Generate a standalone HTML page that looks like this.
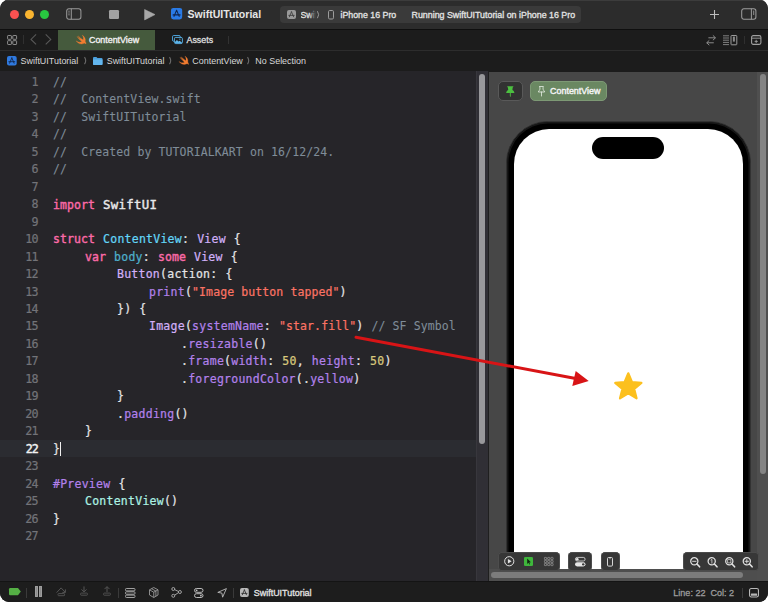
<!DOCTYPE html>
<html lang="en">
<head>
<meta charset="utf-8">
<title>SwiftUITutorial — ContentView.swift</title>
<style>
*{box-sizing:border-box;margin:0;padding:0}
html,body{width:768px;height:602px;overflow:hidden;background:#fff}
body{font-family:"Liberation Sans","DejaVu Sans",sans-serif;color:#dcdcdc;position:relative}
#win{position:absolute;left:0;top:0;width:768px;height:602px;border-radius:8.5px 8.5px 9px 9px;overflow:hidden;background:#1e1e1e}
.abs{position:absolute}
svg{position:absolute;overflow:visible}
/* ---------- title bar ---------- */
#title{position:absolute;left:0;top:0;width:768px;height:30px;background:#2c2c2c;border-bottom:1px solid #0f0f0f;box-shadow:inset 0 1px 0 #3c3c3c}
.tl{position:absolute;top:9.9px;width:9.3px;height:9.3px;border-radius:50%}
#proj{position:absolute;left:187.5px;top:7px;font-size:10.56px;font-weight:bold;color:#e6e6e6;line-height:15px;white-space:nowrap}
#pill{position:absolute;left:280px;top:6px;width:300.8px;height:17px;border-radius:4px;background:#3a3a3a}
.pilltxt{position:absolute;top:10px;font-size:8.8px;line-height:11px;color:#e4e4e4;white-space:nowrap;-webkit-text-stroke:0.3px #e4e4e4}
/* ---------- tab bar ---------- */
#tabs{position:absolute;left:0;top:30px;width:768px;height:21px;background:#1c1c1c;border-bottom:1px solid #2d2d2d}
.sh{position:absolute;left:0;top:-1px;width:768px;height:21px}
#tabA{position:absolute;left:58px;top:1px;width:97px;height:20px;background:#455a3d}
.tabtxt{position:absolute;top:5.5px;font-size:8.9px;line-height:11px;white-space:nowrap;-webkit-text-stroke:0.35px currentColor}
/* ---------- breadcrumb ---------- */
#crumb{position:absolute;left:0;top:51px;width:768px;height:20.5px;background:#1c1c1c}
.ct{position:absolute;top:5.5px;font-size:8.95px;line-height:11px;color:#d8d8d8;white-space:nowrap}
.chev{position:absolute;top:5.5px;font-size:9px;line-height:11px;color:#7a7a7a}
/* ---------- editor ---------- */
#editor{position:absolute;left:0;top:71px;width:476px;height:510px;background:#262529;overflow:hidden}
#hl{position:absolute;left:0;top:368.7px;width:476px;height:17.4px;background:#2b2c31}
.row{position:absolute;left:0;width:476px;height:17.5px;font-family:"DejaVu Sans Mono","Liberation Mono",monospace;font-size:11.5px;line-height:17.5px;white-space:pre}
.ln{position:absolute;right:438px;top:0;color:#737479;font-size:11.7px;letter-spacing:-0.6px;-webkit-text-stroke:0.2px #737479}
.cur-ln{color:#f2f2f2;-webkit-text-stroke:0.45px #f2f2f2;letter-spacing:-0.9px}
.code{position:absolute;top:0;letter-spacing:0.25px;word-spacing:0.83px;color:#dfdfe0;-webkit-text-stroke:0.22px currentColor}
.c{color:#7f8c98;letter-spacing:0.11px;word-spacing:0;-webkit-text-stroke:0.1px #7f8c98}
.k{color:#fb6aa8;letter-spacing:0.08px;-webkit-text-stroke:0.4px #fb6aa8}
.p{color:#e4e4e6}
.mod{color:#e9e9ea;font-size:12.4px;letter-spacing:0.3px;-webkit-text-stroke:0.4px #e9e9ea}
.td{color:#63d6f8}
.od{color:#4eb0cc}
.oc{color:#d2b0f8}
.of{color:#b281eb}
.s{color:#fc7364;word-spacing:0;letter-spacing:0.1px}
.n{color:#d9c97c}
.pc{color:#acf2e4}
.caret{display:inline-block;width:1px;height:14px;background:#f0f0f0;vertical-align:-3px;margin-left:0px}
#gutter{position:absolute;left:476px;top:71px;width:13px;height:510px;background:#302f35;border-right:1.8px solid #1f1f1f;border-left:0.6px solid #38373d}
#scrE{position:absolute;left:479.3px;top:74.3px;width:6px;height:370px;border-radius:3px;background:#98989b}
/* ---------- canvas ---------- */
#canvas{position:absolute;left:489px;top:72px;width:279px;height:509px;background:#474747;overflow:hidden}
#vtrack{position:absolute;left:267.5px;top:0;width:12px;height:509px;background:#4f4f4f}
#vscr{position:absolute;left:270.7px;top:2.3px;width:6.5px;height:400px;border-radius:3.3px;background:#848484}
#htrack{position:absolute;left:0;top:497.2px;width:268px;height:12px;background:#4e4e4e}
#hscr{position:absolute;left:1.8px;top:500.2px;width:252px;height:6px;border-radius:3px;background:#7c7c7c}
#phone{position:absolute;left:16.9px;top:48.9px;width:245.4px;height:560px;border-radius:42px;background:#000;border:1.6px solid #323232;box-shadow:0 0 0 1.5px #171717 inset}
#screen{position:absolute;left:25.2px;top:57.3px;width:228.8px;height:560px;border-radius:35px;background:#fff}
#island{position:absolute;left:103.3px;top:65px;width:71.5px;height:22px;border-radius:11px;background:#000}
.btn{position:absolute;border-radius:4.5px}
#pinbtn{left:8.7px;top:9.1px;width:25px;height:19.9px;background:#323232;border:1px solid #595959;border-radius:5px}
#cvbtn{left:41.1px;top:9.1px;width:76.9px;height:19.7px;background:#6a8862;border:0.8px solid #7d9975;border-radius:5px}
#cvbtn span{position:absolute;left:19px;top:4.1px;font-size:8.92px;line-height:11px;-webkit-text-stroke:0.4px #f4f4f4;color:#f4f4f4;white-space:nowrap}
.tb{position:absolute;top:480px;height:19px;border-radius:4.5px;background:#373737;box-shadow:0 0 0 0.8px #535353 inset}
/* ---------- status bar ---------- */
#status{position:absolute;left:0;top:581px;width:768px;height:21px;background:#1d1d1d;border-top:1px solid #141414}
.st{position:absolute;top:6px;font-size:9.3px;line-height:11px;white-space:nowrap}
</style>
</head>
<body>
<div id="win">

<!-- ================= TITLE BAR ================= -->
<div id="title">
  <div class="tl" style="left:9.7px;background:#fb5251"></div>
  <div class="tl" style="left:24.8px;background:#fab530"></div>
  <div class="tl" style="left:40px;background:#28c840"></div>
  <!-- sidebar toggle -->
  <svg style="left:66px;top:8px" width="16" height="12" viewBox="0 0 16 12"><rect x="0.7" y="0.7" width="14.2" height="10.6" rx="2.2" fill="none" stroke="#999" stroke-width="1.05"/><line x1="5.3" y1="0.7" x2="5.3" y2="11.3" stroke="#999" stroke-width="1"/><path d="M2.2 3.2h1.6M2.2 5h1.6M2.2 6.8h1.6" stroke="#a9a9a9" stroke-width="0.7"/></svg>
  <!-- stop -->
  <div class="abs" style="left:109.4px;top:10.2px;width:9.2px;height:8.7px;border-radius:1.2px;background:#a2a2a2"></div>
  <!-- play -->
  <svg style="left:144px;top:8.7px" width="12" height="12" viewBox="0 0 12 12"><path d="M0.6 0.5 L11 5.6 L0.6 10.9 Z" fill="#a8a8a8" stroke="#a8a8a8" stroke-width="0.6" stroke-linejoin="round"/></svg>
  <!-- app icon -->
  <svg style="left:171px;top:8.4px" width="11.2" height="11.4" viewBox="0 0 11.2 11.4"><rect x="0" y="0" width="11.2" height="11.4" rx="2.5" fill="#2a7be6"/><path d="M5.6 2.3 L3 8.4 M5.6 2.3 L8.2 8.4 M2.1 6.9 H9.1" stroke="#10254d" stroke-width="1.05" fill="none" stroke-linecap="round"/></svg>
  <div id="proj">SwiftUITutorial</div>
  <div id="pill"></div>
  <svg style="left:286.5px;top:10.3px" width="9" height="9" viewBox="0 0 9 9"><rect width="9" height="9" rx="2" fill="#9a9a9a"/><path d="M4.5 1.8 L2.4 6.8 M4.5 1.8 L6.6 6.8 M1.8 5.4 H7.2" stroke="#3a3a3a" stroke-width="0.8" fill="none" stroke-linecap="round"/></svg>
  <div class="pilltxt" style="left:300.5px;width:15px;overflow:hidden;color:#dedede">Swif</div>
  <div class="abs" style="left:309px;top:8px;width:7px;height:14px;background:linear-gradient(90deg,rgba(58,58,58,0),#3a3a3a)"></div>
  <svg style="left:317px;top:11px" width="3" height="7.4" viewBox="0 0 3 7.4"><path d="M0.4 0.2 Q2.9 3.7 0.4 7.2" fill="none" stroke="#a0a0a0" stroke-width="0.9"/></svg>
  <svg style="left:328px;top:10px" width="6" height="9.5" viewBox="0 0 6 9.5"><rect x="0.5" y="0.5" width="5" height="8.5" rx="1.2" fill="none" stroke="#9c9c9c" stroke-width="1"/></svg>
  <div class="pilltxt" style="left:340.5px">iPhone 16 Pro</div>
  <div class="pilltxt" style="left:411.5px;font-size:8.87px">Running SwiftUITutorial on iPhone 16 Pro</div>
  <!-- plus -->
  <svg style="left:709.5px;top:10.2px" width="9" height="9" viewBox="0 0 9 9"><path d="M4.5 0V9M0 4.5H9" stroke="#bdbdbd" stroke-width="1.1"/></svg>
  <!-- inspector toggle -->
  <svg style="left:741px;top:8px" width="16" height="12" viewBox="0 0 16 12"><rect x="0.7" y="0.7" width="14.2" height="10.6" rx="2.2" fill="none" stroke="#9c9c9c" stroke-width="1.05"/><line x1="10.4" y1="0.7" x2="10.4" y2="11.3" stroke="#9c9c9c" stroke-width="1"/><line x1="12.7" y1="2.6" x2="12.7" y2="7" stroke="#a9a9a9" stroke-width="0.8"/></svg>
</div>

<!-- ================= TAB BAR ================= -->
<div id="tabs"><div class="sh">
  <svg style="left:6.9px;top:6.1px" width="10.2" height="10" viewBox="0 0 10 10"><g fill="none" stroke="#9a9a9a" stroke-width="0.9"><rect x="0.5" y="0.5" width="3.8" height="3.8" rx="0.6"/><rect x="5.7" y="0.5" width="3.8" height="3.8" rx="0.6"/><rect x="0.5" y="5.7" width="3.8" height="3.8" rx="0.6"/><rect x="5.7" y="5.7" width="3.8" height="3.8" rx="0.6"/></g></svg>
  <div class="abs" style="left:23.3px;top:6px;width:1px;height:9px;background:#303030"></div>
  <svg style="left:30px;top:5.2px" width="22" height="10.8" viewBox="0 0 22 10.8"><path d="M6.1 0.4 L1 5.4 L6.1 10.4" fill="none" stroke="#595959" stroke-width="1.05"/><path d="M15.7 0.4 L20.8 5.4 L15.7 10.4" fill="none" stroke="#595959" stroke-width="1.05"/></svg>
  <div id="tabA"></div>
  <svg class="swift" style="left:76px;top:6px" width="10.2" height="9.4" viewBox="2.3 3.2 18.4 17"><path d="M13.543 3.41c4.114 2.47 6.545 7.162 5.549 11.131-.024.093-.05.181-.076.272l.002.001c2.062 2.538 1.5 5.258 1.236 4.745-1.072-2.086-3.066-1.568-4.088-1.043a6.803 6.803 0 0 1-.281.158l-.02.012-.002.002c-2.115 1.123-4.957 1.205-7.812-.022a12.568 12.568 0 0 1-5.64-4.838c.649.48 1.35.902 2.097 1.252 3.019 1.414 6.051 1.311 8.197-.002C9.651 12.73 7.101 9.67 5.146 7.191a10.628 10.628 0 0 1-1.005-1.384c2.34 2.142 6.038 4.83 7.365 5.576C8.69 8.408 6.208 4.743 6.324 4.86c4.436 4.47 8.528 6.996 8.528 6.996.154.085.27.154.36.213.085-.215.16-.437.224-.668.708-2.588-.09-5.548-1.893-7.992z" fill="#f27c30" stroke="#f27c30" stroke-width="0.5"/></svg>
  <div class="tabtxt" style="left:89px;color:#f0f0f0">ContentView</div>
  <!-- assets icon -->
  <svg style="left:172px;top:6.1px" width="10.8" height="9" viewBox="0 0 10.8 9"><rect x="0.5" y="0.5" width="7.8" height="5.8" rx="1.3" fill="none" stroke="#4a9fd6" stroke-width="1"/><rect x="2.4" y="2.4" width="8" height="6.2" rx="1.3" fill="#1c1c1c" stroke="#5bb4ea" stroke-width="0.9"/><path d="M2.9 8.2 V6.9 L4.9 5 L6.5 6.6 L7.6 5.8 L9.9 7.6 V8.2 Z" fill="#5bb4ea"/><circle cx="7.9" cy="4.2" r="0.6" fill="#5bb4ea"/></svg>
  <div class="tabtxt" style="left:186.5px;color:#dadada">Assets</div>
  <div class="abs" style="left:228px;top:7px;width:1px;height:8px;background:#323232"></div>
  <!-- right icons -->
  <svg style="left:705.6px;top:5.6px" width="10.2" height="10.6" viewBox="0 0 10.2 10.6"><path d="M2.4 2.8 H9.4 M6.9 0.4 L9.5 2.8 L6.9 5.2 M7.8 7.8 H0.8 M3.3 5.4 L0.7 7.8 L3.3 10.2" fill="none" stroke="#8c8c8c" stroke-width="1"/></svg>
  <svg style="left:723px;top:6px" width="14.5" height="10.5" viewBox="0 0 14.5 10.5"><path d="M0 0.8H6M0 3H6M0 5.2H6M0 7.4H6M0 9.6H6" stroke="#9a9a9a" stroke-width="0.8"/><rect x="8" y="0.5" width="5.8" height="9.3" rx="0.6" fill="none" stroke="#9a9a9a" stroke-width="1"/><rect x="9.9" y="1.6" width="2" height="5" fill="#8a8a8a"/></svg>
  <div class="abs" style="left:744px;top:6.5px;width:1px;height:8.5px;background:#2f2f2f"></div>
  <svg style="left:751px;top:6px" width="10.5" height="10" viewBox="0 0 10.5 10"><rect x="0.6" y="0.6" width="9.3" height="8.8" rx="1.6" fill="none" stroke="#a0a0a0" stroke-width="1.1"/><path d="M0.6 3.2 H9.9 M5.2 4.8 V8 M3.6 6.4 H6.8" stroke="#a0a0a0" stroke-width="0.9"/></svg>
</div></div>

<!-- ================= BREADCRUMB ================= -->
<div id="crumb"><div class="sh">
  <svg style="left:7px;top:6.3px" width="9.7" height="9.5" viewBox="0 0 9.7 9.5"><rect width="9.7" height="9.5" rx="2" fill="#2f7adf"/><path d="M4.85 1.9 L2.6 7.2 M4.85 1.9 L7.1 7.2 M1.9 5.7 H7.8" stroke="#13284f" stroke-width="0.9" fill="none" stroke-linecap="round"/></svg>
  <div class="ct" style="left:20.5px">SwiftUITutorial</div>
  <svg style="left:83.7px;top:7.3px" width="3" height="7.4" viewBox="0 0 3 7.4"><path d="M0.5 0.2 Q2.9 3.7 0.5 7.2" fill="none" stroke="#6a6a6a" stroke-width="1.15"/></svg>
  <svg style="left:92.7px;top:6.8px" width="9.5" height="8" viewBox="0 0 9.5 8"><path d="M0 1 Q0 0 1 0 H3.4 L4.4 1 H8.5 Q9.5 1 9.5 2 V7 Q9.5 8 8.5 8 H1 Q0 8 0 7 Z" fill="#4b9fdb"/><path d="M0 2.4 H9.5 V7 Q9.5 8 8.5 8 H1 Q0 8 0 7 Z" fill="#63b6ee"/></svg>
  <div class="ct" style="left:106.7px">SwiftUITutorial</div>
  <svg style="left:168.7px;top:7.3px" width="3" height="7.4" viewBox="0 0 3 7.4"><path d="M0.5 0.2 Q2.9 3.7 0.5 7.2" fill="none" stroke="#6a6a6a" stroke-width="1.15"/></svg>
  <svg class="swift" style="left:178.6px;top:6.1px" width="9.7" height="8.9" viewBox="2.3 3.2 18.4 17"><path d="M13.543 3.41c4.114 2.47 6.545 7.162 5.549 11.131-.024.093-.05.181-.076.272l.002.001c2.062 2.538 1.5 5.258 1.236 4.745-1.072-2.086-3.066-1.568-4.088-1.043a6.803 6.803 0 0 1-.281.158l-.02.012-.002.002c-2.115 1.123-4.957 1.205-7.812-.022a12.568 12.568 0 0 1-5.64-4.838c.649.48 1.35.902 2.097 1.252 3.019 1.414 6.051 1.311 8.197-.002C9.651 12.73 7.101 9.67 5.146 7.191a10.628 10.628 0 0 1-1.005-1.384c2.34 2.142 6.038 4.83 7.365 5.576C8.69 8.408 6.208 4.743 6.324 4.86c4.436 4.47 8.528 6.996 8.528 6.996.154.085.27.154.36.213.085-.215.16-.437.224-.668.708-2.588-.09-5.548-1.893-7.992z" fill="#f27c30" stroke="#f27c30" stroke-width="0.5"/></svg>
  <div class="ct" style="left:192.3px">ContentView</div>
  <svg style="left:247.4px;top:7.3px" width="3" height="7.4" viewBox="0 0 3 7.4"><path d="M0.5 0.2 Q2.9 3.7 0.5 7.2" fill="none" stroke="#6a6a6a" stroke-width="1.15"/></svg>
  <div class="ct" style="left:255.3px">No Selection</div>
</div></div>

<!-- ================= EDITOR ================= -->
<div id="editor">
<div id="hl"></div>
<div class="row" style="top:2.90px"><span class="ln">1</span><span class="code" style="left:53px"><span class="c">//</span></span></div>
<div class="row" style="top:20.37px"><span class="ln">2</span><span class="code" style="left:53px"><span class="c">//  ContentView.swift</span></span></div>
<div class="row" style="top:37.84px"><span class="ln">3</span><span class="code" style="left:53px"><span class="c">//  SwiftUITutorial</span></span></div>
<div class="row" style="top:55.31px"><span class="ln">4</span><span class="code" style="left:53px"><span class="c">//</span></span></div>
<div class="row" style="top:72.78px"><span class="ln">5</span><span class="code" style="left:53px"><span class="c">//  Created by TUTORIALKART on 16/12/24.</span></span></div>
<div class="row" style="top:90.25px"><span class="ln">6</span><span class="code" style="left:53px"><span class="c">//</span></span></div>
<div class="row" style="top:107.72px"><span class="ln">7</span><span class="code" style="left:53px"></span></div>
<div class="row" style="top:125.19px"><span class="ln">8</span><span class="code" style="left:53px"><span class="k">import</span><span class="p"> </span><span class="mod">SwiftUI</span></span></div>
<div class="row" style="top:142.66px"><span class="ln">9</span><span class="code" style="left:53px"></span></div>
<div class="row" style="top:160.13px"><span class="ln">10</span><span class="code" style="left:53px"><span class="k">struct</span><span class="p"> </span><span class="td">ContentView</span><span class="p">: </span><span class="oc">View</span><span class="p"> {</span></span></div>
<div class="row" style="top:177.60px"><span class="ln">11</span><span class="code" style="left:85px"><span class="k">var</span><span class="p"> </span><span class="od">body</span><span class="p">: </span><span class="k">some</span><span class="p"> </span><span class="oc">View</span><span class="p"> {</span></span></div>
<div class="row" style="top:195.07px"><span class="ln">12</span><span class="code" style="left:117px"><span class="oc">Button</span><span class="p">(action: {</span></span></div>
<div class="row" style="top:212.54px"><span class="ln">13</span><span class="code" style="left:149px"><span class="of">print</span><span class="p">(</span><span class="s">"Image button tapped"</span><span class="p">)</span></span></div>
<div class="row" style="top:230.01px"><span class="ln">14</span><span class="code" style="left:117px"><span class="p">}) {</span></span></div>
<div class="row" style="top:247.48px"><span class="ln">15</span><span class="code" style="left:149px"><span class="oc">Image</span><span class="p">(</span><span class="of">systemName</span><span class="p">: </span><span class="s">"star.fill"</span><span class="p">) </span><span class="c">// SF Symbol</span></span></div>
<div class="row" style="top:264.95px"><span class="ln">16</span><span class="code" style="left:181px"><span class="p">.</span><span class="of">resizable</span><span class="p">()</span></span></div>
<div class="row" style="top:282.42px"><span class="ln">17</span><span class="code" style="left:181px"><span class="p">.</span><span class="of">frame</span><span class="p">(</span><span class="of">width</span><span class="p">: </span><span class="n">50</span><span class="p">, </span><span class="of">height</span><span class="p">: </span><span class="n">50</span><span class="p">)</span></span></div>
<div class="row" style="top:299.89px"><span class="ln">18</span><span class="code" style="left:181px"><span class="p">.</span><span class="of">foregroundColor</span><span class="p">(.</span><span class="of">yellow</span><span class="p">)</span></span></div>
<div class="row" style="top:317.36px"><span class="ln">19</span><span class="code" style="left:117px"><span class="p">}</span></span></div>
<div class="row" style="top:334.83px"><span class="ln">20</span><span class="code" style="left:117px"><span class="p">.</span><span class="of">padding</span><span class="p">()</span></span></div>
<div class="row" style="top:352.30px"><span class="ln">21</span><span class="code" style="left:85px"><span class="p">}</span></span></div>
<div class="row" style="top:369.77px"><span class="ln cur-ln">22</span><span class="code" style="left:53px"><span class="p">}</span><span class="caret"></span></span></div>
<div class="row" style="top:387.24px"><span class="ln">23</span><span class="code" style="left:53px"></span></div>
<div class="row" style="top:404.71px"><span class="ln">24</span><span class="code" style="left:53px"><span class="of">#Preview</span><span class="p"> {</span></span></div>
<div class="row" style="top:422.18px"><span class="ln">25</span><span class="code" style="left:85px"><span class="pc">ContentView</span><span class="p">()</span></span></div>
<div class="row" style="top:439.65px"><span class="ln">26</span><span class="code" style="left:53px"><span class="p">}</span></span></div>
<div class="row" style="top:457.12px"><span class="ln">27</span><span class="code" style="left:53px"></span></div>
</div>
<div id="gutter"></div>
<div id="scrE"></div>

<!-- ================= PREVIEW CANVAS ================= -->
<div id="canvas">
  <div id="phone"></div>
  <div id="screen"></div>
  <div id="island"></div>
  <!-- star -->
  <svg style="left:124.7px;top:300.1px" width="28.6" height="28.3" viewBox="0 0 29 28.5"><path d="M14.5 1.2 L18.3 10.2 L27.8 10.9 L20.5 17.1 L22.9 26.6 L14.5 21.5 L6.1 26.6 L8.5 17.1 L1.2 10.9 L10.7 10.2 Z" fill="#fcc01e" stroke="#fcc01e" stroke-width="2.2" stroke-linejoin="round"/></svg>
  <div id="htrack"></div>
  <div id="hscr"></div>
  <div id="vtrack"></div>
  <div id="vscr"></div>
  <!-- top buttons -->
  <div class="btn" id="pinbtn">
    <svg style="left:7px;top:4px" width="8.6" height="11.4" viewBox="0 0 8.6 11.4"><path d="M1.3 0.2 H7.3 Q7.6 0.9 6.7 1.5 L6.4 4.1 C7.6 4.8 8.3 5.8 8.4 7 H4.75 V10 L4.3 11.3 L3.85 10 V7 H0.2 C0.3 5.8 1 4.8 2.2 4.1 L1.9 1.5 Q1 0.9 1.3 0.2 Z" fill="#4cc040"/></svg>
  </div>
  <div class="btn" id="cvbtn">
    <svg style="left:6.9px;top:4.4px" width="7" height="10.5" viewBox="0 0 7 10.5"><path d="M1.6 0.5 H5.4 L5.1 1.5 L5 3.6 C6 4.2 6.5 5 6.6 6 H0.4 C0.5 5 1 4.2 2 3.6 L1.9 1.5 Z M3.5 6 V10" fill="none" stroke="#e8efe6" stroke-width="0.8" stroke-linejoin="round" stroke-linecap="round"/></svg>
    <span>ContentView</span>
  </div>
  <!-- bottom toolbars -->
  <div class="tb" style="left:9px;width:61.5px">
    <svg style="left:6px;top:4.3px" width="10.5" height="10.5" viewBox="0 0 10.5 10.5"><circle cx="5.25" cy="5.25" r="4.6" fill="none" stroke="#e2e2e2" stroke-width="1"/><path d="M3.9 3 L7.6 5.25 L3.9 7.5 Z" fill="#e2e2e2"/></svg>
    <svg style="left:25.5px;top:5px" width="9" height="9" viewBox="0 0 9 9"><rect width="9" height="9" rx="1.3" fill="#3fb73c"/><path d="M3.2 1.6 L3.2 7 L4.5 5.8 L5.4 7.6 L6.1 7.2 L5.2 5.5 L6.9 5.3 Z" fill="#10260f"/></svg>
    <svg style="left:46px;top:5px" width="9.5" height="9" viewBox="0 0 9.5 9"><g fill="none" stroke="#9c9c9c" stroke-width="0.7"><rect x="0.4" y="0.4" width="2.2" height="2.2" rx="0.4"/><rect x="3.65" y="0.4" width="2.2" height="2.2" rx="0.4"/><rect x="6.9" y="0.4" width="2.2" height="2.2" rx="0.4"/><rect x="0.4" y="3.4" width="2.2" height="2.2" rx="0.4"/><rect x="3.65" y="3.4" width="2.2" height="2.2" rx="0.4"/><rect x="6.9" y="3.4" width="2.2" height="2.2" rx="0.4"/><rect x="0.4" y="6.4" width="2.2" height="2.2" rx="0.4"/><rect x="3.65" y="6.4" width="2.2" height="2.2" rx="0.4"/><rect x="6.9" y="6.4" width="2.2" height="2.2" rx="0.4"/></g></svg>
  </div>
  <div class="tb" style="left:79px;width:24px">
    <svg style="left:6.8px;top:5px" width="10.5" height="9.5" viewBox="0 0 10.5 9.5"><rect x="0.4" y="0.4" width="9.7" height="3.6" rx="1.8" fill="none" stroke="#e4e4e4" stroke-width="0.8"/><circle cx="2.3" cy="2.2" r="1.3" fill="#e4e4e4"/><rect x="0" y="5.2" width="10.5" height="4.3" rx="2.15" fill="#e4e4e4"/><circle cx="8.2" cy="7.35" r="1.2" fill="#383838"/></svg>
  </div>
  <div class="tb" style="left:111.6px;width:19.5px">
    <svg style="left:6.8px;top:4.7px" width="6" height="9.6" viewBox="0 0 6 9.6"><rect x="0.5" y="0.5" width="5" height="8.6" rx="1.1" fill="none" stroke="#d8d8d8" stroke-width="1"/><line x1="2.2" y1="1.7" x2="3.8" y2="1.7" stroke="#d8d8d8" stroke-width="0.6"/></svg>
  </div>
  <div class="tb" style="left:194px;width:75.7px">
    <svg style="left:6.5px;top:4.5px" width="64" height="11" viewBox="0 0 64 11">
      <g fill="none" stroke="#e2e2e2" stroke-width="1.25" stroke-linecap="round">
        <circle cx="4.3" cy="4.3" r="3.6"/><path d="M7 7 L9.6 9.8" stroke-width="1.6"/><path d="M2.6 4.3 H6" stroke-width="0.9"/>
        <circle cx="21.7" cy="4.3" r="3.6"/><path d="M24.4 7 L27 9.8" stroke-width="1.6"/><path d="M21 3 L21.9 2.4 V6.2" stroke-width="0.8"/>
        <circle cx="39.3" cy="4.3" r="3.6"/><path d="M42 7 L44.6 9.8" stroke-width="1.6"/><rect x="37.7" y="2.7" width="3.2" height="3.2" stroke-width="0.7"/>
        <circle cx="56.8" cy="4.3" r="3.6"/><path d="M59.5 7 L62.1 9.8" stroke-width="1.6"/><path d="M55.1 4.3 H58.5 M56.8 2.6 V6" stroke-width="0.9"/>
      </g>
    </svg>
  </div>
</div>

<!-- ================= ARROW ================= -->
<svg style="left:0;top:0" width="768" height="602" viewBox="0 0 768 602">
  <line x1="356" y1="337.3" x2="577" y2="378.8" stroke="#d81416" stroke-width="2.95" stroke-linecap="round"/>
  <path d="M588.7 381 L572.3 386 L575.7 370.9 Z" fill="#d81416"/>
</svg>

<!-- ================= STATUS BAR ================= -->
<div id="status">
  <svg style="left:8.8px;top:5.9px" width="12" height="7.2" viewBox="0 0 12 7.2"><path d="M1.2 0 H9 L11.8 3.6 L9 7.2 H1.2 Q0 7.2 0 6 V1.2 Q0 0 1.2 0 Z" fill="#55b045"/></svg>
  <div class="abs" style="left:26px;top:5.5px;width:1px;height:10px;background:#3a3a3a"></div>
  <div class="abs" style="left:35px;top:4.3px;width:2.9px;height:10.4px;border-radius:0.9px;background:#8c8c8c;box-shadow:0 0 0 0.5px #b0b0b0 inset"></div>
  <div class="abs" style="left:39.1px;top:4.3px;width:2.9px;height:10.4px;border-radius:0.9px;background:#8c8c8c;box-shadow:0 0 0 0.5px #b0b0b0 inset"></div>
  <!-- step over / in / out (disabled) -->
  <svg style="left:56px;top:4.8px" width="10.5" height="9.4" viewBox="0 0 10.5 9.4"><path d="M0.6 5.6 L5.1 0.9 L9.2 5.2 M9.4 2.4 V5.4 H6.4" fill="none" stroke="#585858" stroke-width="0.95"/><rect x="2" y="6.6" width="6.6" height="2.1" rx="0.6" fill="none" stroke="#585858" stroke-width="0.85"/></svg>
  <svg style="left:80px;top:4.4px" width="8" height="10" viewBox="0 0 8 10"><path d="M4 0.4 V5.8 M1.5 3.4 L4 5.9 L6.5 3.4" fill="none" stroke="#585858" stroke-width="0.95"/><rect x="0.6" y="7.1" width="6.8" height="2.1" rx="0.6" fill="none" stroke="#585858" stroke-width="0.85"/></svg>
  <svg style="left:103px;top:4.4px" width="8" height="10" viewBox="0 0 8 10"><path d="M4 6.2 V0.8 M1.5 3.1 L4 0.6 L6.5 3.1" fill="none" stroke="#585858" stroke-width="0.95"/><rect x="0.6" y="7.1" width="6.8" height="2.1" rx="0.6" fill="none" stroke="#585858" stroke-width="0.85"/></svg>
  <div class="abs" style="left:118px;top:5.5px;width:1px;height:10px;background:#3a3a3a"></div>
  <!-- stack -->
  <svg style="left:125px;top:5.5px" width="10.5" height="10" viewBox="0 0 10.5 10"><g fill="none" stroke="#b0b0b0" stroke-width="0.9"><rect x="0.5" y="0.5" width="9.5" height="2.4" rx="0.9"/><rect x="0.5" y="3.8" width="9.5" height="2.4" rx="0.9"/><rect x="0.5" y="7.1" width="9.5" height="2.4" rx="0.9"/></g></svg>
  <!-- cube -->
  <svg style="left:148.5px;top:5px" width="9.5" height="11" viewBox="0 0 9.5 11"><path d="M4.75 0.5 L9 2.8 V8 L4.75 10.5 L0.5 8 V2.8 Z M4.75 5.2 V10.4 M0.6 2.9 L4.75 5.2 L8.9 2.9 M2.6 1.7 L6.9 4.1 V9.2" fill="none" stroke="#a8a8a8" stroke-width="0.8" stroke-linejoin="round"/></svg>
  <!-- graph -->
  <svg style="left:170.5px;top:5px" width="11" height="11" viewBox="0 0 11 11"><g fill="none" stroke="#b0b0b0" stroke-width="0.9"><circle cx="2.3" cy="2" r="1.5"/><circle cx="2.3" cy="8.8" r="1.5"/><circle cx="8.9" cy="5" r="1.5"/><path d="M3.6 2.6 L7.5 4.5 M3.6 8.2 L7.5 5.6"/></g></svg>
  <!-- toggles -->
  <svg style="left:194px;top:5.5px" width="9.5" height="10" viewBox="0 0 9.5 10"><g fill="none" stroke="#c4c4c4" stroke-width="0.95"><rect x="0.5" y="0.5" width="8.5" height="3.8" rx="1.9"/><rect x="0.5" y="5.7" width="8.5" height="3.8" rx="1.9"/></g><circle cx="2.6" cy="2.4" r="0.9" fill="#c4c4c4"/><circle cx="6.9" cy="7.6" r="0.9" fill="#c4c4c4"/></svg>
  <!-- location -->
  <svg style="left:216.5px;top:5.5px" width="10" height="10" viewBox="0 0 10 10"><path d="M9.4 0.6 L0.8 4.4 L4.9 5.1 L5.6 9.2 Z" fill="none" stroke="#b4b4b4" stroke-width="0.95" stroke-linejoin="round"/></svg>
  <div class="abs" style="left:232.7px;top:5.5px;width:1px;height:10px;background:#3a3a3a"></div>
  <svg style="left:240.3px;top:6px" width="8.8" height="9" viewBox="0 0 9 9"><rect width="9" height="9" rx="2" fill="#b9b9b9"/><path d="M4.5 1.8 L2.4 6.8 M4.5 1.8 L6.6 6.8 M1.8 5.4 H7.2" stroke="#262626" stroke-width="0.8" fill="none" stroke-linecap="round"/></svg>
  <div class="st" style="left:253.8px;color:#e4e4e4;font-size:8.95px;-webkit-text-stroke:0.3px #e4e4e4">SwiftUITutorial</div>
  <div class="st" style="left:673.3px;color:#9b9b9b;font-size:9.05px;-webkit-text-stroke:0.3px #9b9b9b">Line: 22&nbsp; Col: 2</div>
  <div class="abs" style="left:741.5px;top:5.5px;width:1px;height:10px;background:#3a3a3a"></div>
  <svg style="left:749.2px;top:6.3px" width="10" height="9.5" viewBox="0 0 10 9.5"><rect x="0.55" y="0.55" width="8.9" height="8.4" rx="1.6" fill="none" stroke="#b8b8b8" stroke-width="1.1"/><rect x="1.9" y="5.6" width="6.2" height="2.2" rx="0.5" fill="#b8b8b8"/></svg>
</div>

</div>
</body>
</html>
